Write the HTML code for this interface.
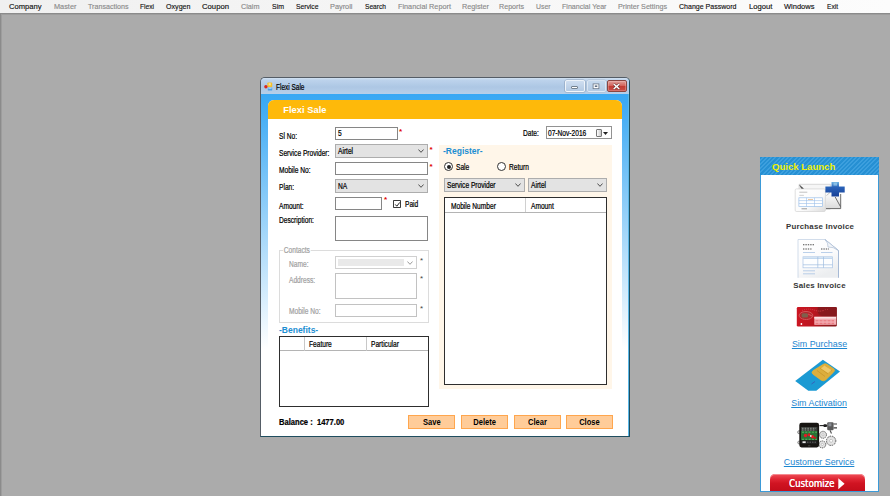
<!DOCTYPE html>
<html>
<head>
<meta charset="utf-8">
<title>Flexi Sale</title>
<style>
html,body{margin:0;padding:0;}
body{width:890px;height:496px;overflow:hidden;background:#ababab;font-family:"Liberation Sans",sans-serif;font-size:8px;color:#000;position:relative;}
.abs{position:absolute;}
*{box-sizing:border-box;}
/* menu */
#menubar{position:absolute;left:0;top:0;width:890px;height:13px;background:linear-gradient(90deg,#f0f0f0,#fcfcfc);}
#menubar span{position:absolute;top:0.5px;height:11px;line-height:11px;font-size:8px;white-space:nowrap;color:#111;transform-origin:0 50%;}
#menubar span.d{color:#8a8a8a;}
#menubar span{-webkit-text-stroke:0.15px currentColor;}
#mdiedge{position:absolute;left:0;top:13px;width:890px;height:483px;box-shadow:inset 1px 1px 0 #8b8b8b,inset 2px 2px 0 #9d9d9d;}
/* window */
#win{position:absolute;left:260px;top:77px;width:370px;height:360px;border:1px solid #555d66;border-right-color:#1f4e5f;border-bottom-color:#1f4e5f;border-bottom-width:1.6px;border-radius:5px 5px 0 0;background:#bdd4ec;overflow:hidden;}
#titlebar{position:absolute;left:0;top:0;width:368px;height:16px;background:linear-gradient(#d3e2f2 0px,#bdd3ec 2px,#adc7e4 9px,#b7cfe9 16px);}
#client{position:absolute;left:0px;top:15.5px;width:368px;height:343px;border-right:1px solid #5ab8e8;background:linear-gradient(#38a8f4 0px,#3eaaf4 10px,#ffffff 255px);}
.lbl{position:absolute;white-space:nowrap;font-size:8.4px;line-height:10px;height:10px;color:#000;transform-origin:0 50%;transform:scaleX(0.79);}
.lbl,.cb .t{-webkit-text-stroke:0.22px currentColor;}
.g{color:#a2a2a2;}
.tb{position:absolute;background:#fff;border:1px solid #868686;}
.cb{position:absolute;background:#e3e3e3;border:1px solid #adadad;}
.cb .t{position:absolute;left:2px;top:1px;font-size:8.4px;line-height:10px;white-space:nowrap;transform-origin:0 50%;transform:scaleX(0.79);}
.cb svg{position:absolute;right:2.6px;top:4.2px;}
.star{position:absolute;color:#e00000;font-size:8px;line-height:8px;font-weight:bold;}
.hd{position:absolute;font-weight:bold;color:#1c8ed2;font-size:8.5px;line-height:10px;white-space:nowrap;transform-origin:0 50%;}
.btn{position:absolute;top:414.5px;width:47px;height:14px;background:#ffcc99;border:1px solid #ffa64d;font-weight:bold;font-size:8.4px;line-height:12px;text-align:center;color:#000;}
.btn span{display:inline-block;transform:scaleX(0.9);}
.grid{position:absolute;background:#fff;border:1px solid #2e2e2e;}
.qi{font-size:7.9px;line-height:10px;text-align:center;color:#363636;white-space:nowrap;font-weight:bold;letter-spacing:0.2px;}
.ql{font-size:8.9px;line-height:10px;text-align:center;color:#1c86d0;white-space:nowrap;text-decoration:underline;}
</style>
</head>
<body>
<div id="mdiedge"></div>
<div id="menubar">
<span style="left:9px;transform:scaleX(0.948)">Company</span>
<span class="d" style="left:53.5px;transform:scaleX(0.918)">Master</span>
<span class="d" style="left:87.5px;transform:scaleX(0.890)">Transactions</span>
<span style="left:140px;transform:scaleX(0.828)">Flexi</span>
<span style="left:166px;transform:scaleX(0.888)">Oxygen</span>
<span style="left:202px;transform:scaleX(0.964)">Coupon</span>
<span class="d" style="left:240.5px;transform:scaleX(0.902)">Claim</span>
<span style="left:271.5px;transform:scaleX(0.870)">Sim</span>
<span style="left:295.5px;transform:scaleX(0.843)">Service</span>
<span class="d" style="left:330px;transform:scaleX(0.918)">Payroll</span>
<span style="left:364.5px;transform:scaleX(0.827)">Search</span>
<span class="d" style="left:397.5px;transform:scaleX(0.909)">Financial Report</span>
<span class="d" style="left:461.5px;transform:scaleX(0.906)">Register</span>
<span class="d" style="left:499px;transform:scaleX(0.893)">Reports</span>
<span class="d" style="left:536px;transform:scaleX(0.858)">User</span>
<span class="d" style="left:562px;transform:scaleX(0.885)">Financial Year</span>
<span class="d" style="left:618px;transform:scaleX(0.896)">Printer Settings</span>
<span style="left:679px;transform:scaleX(0.879)">Change Password</span>
<span style="left:749px;transform:scaleX(0.959)">Logout</span>
<span style="left:784px;transform:scaleX(0.938)">Windows</span>
<span style="left:826.5px;transform:scaleX(0.827)">Exit</span>
</div>

<!-- window chrome -->
<div id="win">
  <div id="titlebar"></div>
  <div id="client"></div>
</div>
<div class="lbl" style="left:276px;top:82.2px;font-size:9px;transform:scaleX(0.72);">Flexi Sale</div>
<!-- caption buttons -->
<div class="abs" style="left:565px;top:80.3px;width:19.5px;height:11.4px;border:1px solid rgba(255,255,255,0.75);box-shadow:0 0 0 0.6px #90a4bc;border-radius:2px;background:linear-gradient(#cfdef0,#b4cae3);"></div>
<div class="abs" style="left:571px;top:86.2px;width:6.6px;height:2.8px;background:#fff;border:0.7px solid #74828f;border-radius:1px;"></div>
<div class="abs" style="left:586.6px;top:80.3px;width:19.3px;height:11.4px;border:1px solid rgba(255,255,255,0.45);box-shadow:0 0 0 0.5px #a9bbd0;border-radius:2px;background:linear-gradient(#c6d9ee,#b4cae3);"></div>
<svg class="abs" style="left:591.5px;top:83px" width="8" height="7" viewBox="0 0 8 7"><rect x="1.1" y="0.9" width="5.8" height="4.8" fill="#fff" stroke="#6a7686" stroke-width="0.8"/><rect x="2.8" y="2.4" width="2.5" height="1.6" fill="#5f6f86"/></svg>
<div class="abs" style="left:607px;top:80.2px;width:20px;height:11.6px;border:0.8px solid #8a4540;border-radius:2px;background:linear-gradient(#e0a09a 0%,#d4665e 45%,#c23a32 50%,#c85048 100%);box-shadow:inset 0 0 0 0.6px rgba(255,220,215,0.5);"></div>
<svg class="abs" style="left:612.4px;top:82.6px" width="9" height="7" viewBox="0 0 9 7"><path d="M1.7 1 L7.3 6 M7.3 1 L1.7 6" stroke="#6a3330" stroke-width="2.5" fill="none"/><path d="M1.7 1 L7.3 6 M7.3 1 L1.7 6" stroke="#fff" stroke-width="1.5" fill="none"/></svg>
<!-- title icon -->
<svg class="abs" style="left:263px;top:81px" width="11" height="11" viewBox="0 0 11 11">
  <rect x="4.4" y="1.4" width="4.8" height="4.8" rx="0.8" fill="#f5bf2a"/>
  <rect x="5.6" y="2.2" width="2.2" height="2.2" fill="#fbe28a"/>
  <rect x="4.8" y="6.4" width="4.4" height="3" rx="0.5" fill="#4aa0e6"/>
  <rect x="5.4" y="6.6" width="3.2" height="1" fill="#cfe5f8"/>
  <circle cx="2.9" cy="5.7" r="1.7" fill="#d8281e"/>
</svg>
<!-- inner panel -->
<div class="abs" style="left:268px;top:100px;width:354px;height:335px;background:#fff;border-radius:6px 6px 0 0;"></div>
<div class="abs" style="left:268px;top:100px;width:354px;height:18.5px;background:#feb90a;border-radius:6px 6px 0 0;"></div>
<div class="abs" style="left:283.2px;top:104.4px;font-weight:bold;font-size:9.3px;line-height:12px;color:#fff;white-space:nowrap;letter-spacing:0.05px;">Flexi Sale</div>

<!-- left column -->
<div class="lbl" style="left:279px;top:131px;">Sl No:</div>
<div class="tb" style="left:335px;top:127px;width:63px;height:13px;"><div class="lbl" style="left:2px;top:0px;">5</div></div>
<div class="star" style="left:399px;top:128px;">*</div>

<div class="lbl" style="left:279px;top:148px;">Service Provider:</div>
<div class="cb" style="left:335px;top:144px;width:93px;height:14px;"><div class="t">Airtel</div><svg width="6" height="4" viewBox="0 0 6 4"><path d="M0.4 0.5 L3 3.3 L5.6 0.5" fill="none" stroke="#3c3c3c" stroke-width="0.9"/></svg></div>
<div class="star" style="left:429.5px;top:146px;">*</div>

<div class="lbl" style="left:279px;top:165px;">Mobile No:</div>
<div class="tb" style="left:335px;top:162px;width:93px;height:13px;"></div>
<div class="star" style="left:429.5px;top:163px;">*</div>

<div class="lbl" style="left:279px;top:182px;">Plan:</div>
<div class="cb" style="left:335px;top:179px;width:93px;height:14px;"><div class="t">NA</div><svg width="6" height="4" viewBox="0 0 6 4"><path d="M0.4 0.5 L3 3.3 L5.6 0.5" fill="none" stroke="#3c3c3c" stroke-width="0.9"/></svg></div>

<div class="lbl" style="left:279px;top:201px;">Amount:</div>
<div class="tb" style="left:335px;top:197px;width:47.4px;height:13px;"></div>
<div class="star" style="left:384px;top:196px;">*</div>
<div class="abs" style="left:393px;top:200px;width:8.4px;height:8.4px;border:1px solid #3c3c3c;border-radius:0.8px;background:#fff;"></div>
<svg class="abs" style="left:393.7px;top:200.8px" width="7" height="7" viewBox="0 0 7 7"><path d="M1.2 3.4 L2.8 5.2 L5.8 1.4" stroke="#222" stroke-width="1" fill="none"/></svg>
<div class="lbl" style="left:405px;top:199px;">Paid</div>

<div class="lbl" style="left:279px;top:215px;">Description:</div>
<div class="tb" style="left:335px;top:216px;width:93px;height:25px;"></div>

<!-- contacts groupbox -->
<div class="abs" style="left:279px;top:250px;width:150px;height:73px;border:1px solid #dcdcdc;"></div>
<div class="lbl g" style="left:283px;top:245px;background:#fff;padding:0 1px;">Contacts</div>
<div class="lbl g" style="left:289px;top:259px;">Name:</div>
<div class="cb" style="left:335px;top:256px;width:82px;height:13px;background:#fff;border-color:#d0d0d0;"><div class="abs" style="left:2px;top:2px;width:66px;height:7px;background:#e9e9e9;"></div><svg width="6" height="4" viewBox="0 0 6 4"><path d="M0.4 0.5 L3 3.3 L5.6 0.5" fill="none" stroke="#9a9a9a" stroke-width="1"/></svg></div>
<div class="star" style="left:420px;top:257px;color:#444;font-weight:normal;">*</div>
<div class="lbl g" style="left:289px;top:275px;">Address:</div>
<div class="tb" style="left:335px;top:273px;width:82px;height:26px;border-color:#c2c2c2;"></div>
<div class="star" style="left:420px;top:275px;color:#444;font-weight:normal;">*</div>
<div class="lbl g" style="left:289px;top:306px;">Mobile No:</div>
<div class="tb" style="left:335px;top:304px;width:82px;height:13px;border-color:#c2c2c2;"></div>
<div class="star" style="left:420px;top:305px;color:#444;font-weight:normal;">*</div>

<!-- benefits -->
<div class="hd" style="left:279px;top:325px;">-Benefits-</div>
<div class="grid" style="left:279px;top:336px;width:150px;height:71px;">
  <div class="abs" style="left:0;top:0;width:148px;height:14px;border-bottom:1px solid #b4b4b4;"></div>
  <div class="abs" style="left:24px;top:0;width:1px;height:14px;background:#c8c8c8;"></div>
  <div class="abs" style="left:86px;top:0;width:1px;height:14px;background:#c8c8c8;"></div>
  <div class="lbl" style="left:29px;top:2px;">Feature</div>
  <div class="lbl" style="left:91px;top:2px;">Particular</div>
</div>

<!-- right column -->
<div class="lbl" style="left:523px;top:128px;">Date:</div>
<div class="tb" style="left:546px;top:126px;width:66px;height:13px;border-color:#929292;"><div class="lbl" style="left:0.8px;top:0.6px;">07-Nov-2016</div>
  <div class="abs" style="left:49px;top:2px;width:6px;height:8px;border:1px solid #777;border-radius:1px;background:linear-gradient(90deg,#fff,#c8c8c8);"></div>
  <svg class="abs" style="left:56px;top:5px" width="5" height="3" viewBox="0 0 5 3"><path d="M0 0 H5 L2.5 3 Z" fill="#222"/></svg>
</div>

<div class="abs" style="left:439.3px;top:144.6px;width:172.5px;height:244px;background:#fff6e9;"></div>
<div class="hd" style="left:443px;top:146.2px;">-Register-</div>

<div class="abs" style="left:444px;top:162px;width:9px;height:9px;border:1px solid #333;border-radius:50%;background:#fff;"></div>
<div class="abs" style="left:446.5px;top:164.5px;width:4px;height:4px;border-radius:50%;background:#222;"></div>
<div class="lbl" style="left:456px;top:162px;">Sale</div>
<div class="abs" style="left:497px;top:162px;width:9px;height:9px;border:1px solid #333;border-radius:50%;background:#fff;"></div>
<div class="lbl" style="left:509px;top:162px;">Return</div>

<div class="cb" style="left:444px;top:178px;width:81px;height:13.7px;"><div class="t">Service Provider</div><svg width="6" height="4" viewBox="0 0 6 4"><path d="M0.4 0.5 L3 3.3 L5.6 0.5" fill="none" stroke="#3c3c3c" stroke-width="0.9"/></svg></div>
<div class="cb" style="left:528px;top:178px;width:79px;height:13.7px;"><div class="t">Airtel</div><svg width="6" height="4" viewBox="0 0 6 4"><path d="M0.4 0.5 L3 3.3 L5.6 0.5" fill="none" stroke="#3c3c3c" stroke-width="0.9"/></svg></div>

<div class="grid" style="left:444px;top:197.4px;width:163px;height:187.2px;">
  <div class="abs" style="left:0;top:0;width:161px;height:15px;border-bottom:1px solid #b4b4b4;"></div>
  <div class="abs" style="left:80px;top:0;width:1px;height:14px;background:#d0d0d0;"></div>
  <div class="lbl" style="left:6px;top:2.5px;">Mobile Number</div>
  <div class="lbl" style="left:86px;top:2.5px;">Amount</div>
</div>

<!-- bottom -->
<div class="lbl" style="left:279px;top:417px;font-weight:bold;transform:scaleX(0.905);">Balance :&nbsp; 1477.00</div>
<div class="btn" style="left:408px;"><span>Save</span></div>
<div class="btn" style="left:461px;"><span>Delete</span></div>
<div class="btn" style="left:514px;"><span>Clear</span></div>
<div class="btn" style="left:566px;"><span>Close</span></div>

<!-- Quick Launch -->
<div class="abs" style="left:760px;top:157px;width:119px;height:335px;background:#fff;border:1.6px solid #3b9ad8;border-top:none;"></div>
<div class="abs" style="left:760px;top:157px;width:119px;height:18px;background:repeating-linear-gradient(135deg,#2690d3 0px,#2690d3 1.6px,#3c9fde 1.6px,#3c9fde 3px);"></div>
<div class="abs" id="qlt" style="left:772.3px;top:160.9px;transform-origin:0 50%;transform:scaleX(1.02);font-weight:bold;font-size:9.4px;line-height:12px;color:#f2f000;white-space:nowrap;">Quick Launch</div>

<!-- purchase invoice icon -->
<svg class="abs" style="left:790px;top:178px" width="60" height="38" viewBox="0 0 60 38">
  <defs>
    <linearGradient id="pg1" x1="0" y1="0" x2="1" y2="1"><stop offset="0" stop-color="#ffffff"/><stop offset="0.6" stop-color="#fbfbfb"/><stop offset="1" stop-color="#dcdcdc"/></linearGradient>
    <linearGradient id="pl1" x1="0" y1="0" x2="0" y2="1"><stop offset="0" stop-color="#6fb4e2"/><stop offset="0.35" stop-color="#2a62b8"/><stop offset="1" stop-color="#173f96"/></linearGradient>
    <linearGradient id="ev1" x1="0" y1="0" x2="0" y2="1"><stop offset="0" stop-color="#ffffff"/><stop offset="1" stop-color="#dadada"/></linearGradient>
  </defs>
  <path d="M9.1 6.3 H40.4 V31 H9.1 Z" fill="#f6f6f6" stroke="#c9c9c9" stroke-width="0.7"/>
  <path d="M35.5 14 H50.8 V30.8 H35.5 Z" fill="url(#ev1)"/>
  <path d="M45.2 19 L50.4 28.5 M36 30.6 H50.6 M50.7 16 V30.6" stroke="#4a4a4a" stroke-width="0.8" fill="none"/>
  <path d="M36.5 17.5 L40 14.500" stroke="#9a9a9a" stroke-width="0.6"/>
  <rect x="5.2" y="10.900" width="30.200" height="22.600" rx="1.300" fill="url(#pg1)" stroke="#d2d2d2" stroke-width="0.7"/>
  <path d="M9.600 7.200 L13.400 10.400 L11.400 10.300 Z" fill="#444" stroke="#444" stroke-width="0.5"/>
  <rect x="9.300" y="13.600" width="8" height="1.300" fill="#cfcfcf"/><rect x="9.300" y="16.800" width="4.600" height="1.200" fill="#d6d6d6"/>
  <rect x="8.900" y="19.800" width="23.600" height="8.700" fill="#fff" stroke="#9cc0ea" stroke-width="0.7"/>
  <path d="M8.900 22.600 H32.500 M8.900 25.500 H32.500 M16.500 19.800 V28.500 M24.500 19.800 V28.500" stroke="#9cc0ea" stroke-width="0.6"/>
  <rect x="18" y="21" width="5" height="0.800" fill="#e6b98a"/>
  <rect x="11.500" y="30.300" width="5.500" height="1" fill="#9a9a9a"/>
  <path d="M41.500 4.100 H49 V8.500 H54.700 V14.500 H49 V18.600 H41.500 V14.500 H35.400 V8.500 H41.500 Z" fill="url(#pl1)"/>
  <rect x="43.500" y="4.600" width="3.500" height="3" fill="#9fd0ee" opacity="0.700"/>
</svg>
<div class="abs qi" style="left:786px;top:221.8px;width:67px;">Purchase Invoice</div>

<!-- sales invoice icon -->
<svg class="abs" style="left:795px;top:237px" width="48" height="44" viewBox="0 0 48 44">
  <defs><linearGradient id="pg2" x1="0" y1="0" x2="0.5" y2="1"><stop offset="0" stop-color="#ffffff"/><stop offset="0.6" stop-color="#fbfbfc"/><stop offset="1" stop-color="#eceef0"/></linearGradient></defs>
  <path d="M3 2.500 H30 L43.500 13.500 V40.800 H3 Z" fill="url(#pg2)"/>
  <path d="M3 40.800 V2.500 H30" fill="none" stroke="#c6d4e6" stroke-width="0.8"/>
  <path d="M30 2.500 L43.500 13.500 V40.800" fill="none" stroke="#9db2d0" stroke-width="0.9"/>
  <path d="M30 2.500 Q33.500 6,33 10 Q38 9.500,43.500 13.500 Z" fill="#f3f5f8" stroke="#aebfd6" stroke-width="0.7"/>
  <path d="M8 7.800 H19 M8 12 H16.500 M26 12 H34" stroke="#4c4c4c" stroke-width="1.100" stroke-dasharray="1.400 1"/>
  <path d="M8 15.500 H20 M26 15.500 H37.500" stroke="#a9c4e4" stroke-width="0.8"/>
  <rect x="8" y="19.800" width="29.500" height="11" fill="#fdfeff" stroke="#a9c4e4" stroke-width="0.7"/>
  <path d="M8 21.200 H37.500" stroke="#c3d8ef" stroke-width="1.600"/>
  <path d="M8 27.800 H37.500 M22.800 19.800 V30.800 M28.500 19.800 V30.800" stroke="#9dbbe0" stroke-width="0.7"/>
  <path d="M8 33.800 H20 M8 36.800 H20" stroke="#a9c4e4" stroke-width="0.8"/>
</svg>
<div class="abs qi" style="left:786px;top:280.6px;width:67px;">Sales Invoice</div>

<!-- sim purchase icon -->
<svg class="abs" style="left:796px;top:306px" width="42" height="22" viewBox="0 0 42 22">
  <defs><linearGradient id="rc" x1="0" y1="0" x2="1" y2="0"><stop offset="0" stop-color="#cc1622"/><stop offset="0.45" stop-color="#b8161f"/><stop offset="0.7" stop-color="#97191e"/><stop offset="1" stop-color="#85191c"/></linearGradient></defs>
  <rect x="0.800" y="1" width="40" height="19.500" rx="1.300" fill="url(#rc)"/>
  <path d="M22 1 H39.500 Q40.800 1,40.800 2.300 V10 H26 Q20 8,22 1 Z" fill="#861a1d" opacity="0.850"/>
  <path d="M6 4.500 Q12 2,18 4 T27 4.500" stroke="#e0535b" stroke-width="0.700" fill="none" stroke-dasharray="1 1"/>
  <path d="M27 5 Q30 2.500,33 4" stroke="#c93a40" stroke-width="0.800" fill="none" stroke-dasharray="1 1.200"/>
  <ellipse cx="10" cy="9.500" rx="6.800" ry="4" fill="#b4262c" stroke="#e9a09c" stroke-width="0.700" stroke-dasharray="1.200 0.800"/>
  <rect x="5.600" y="7.200" width="6.500" height="4.200" rx="1.500" fill="#80604c"/>
  <path d="M12 8 L16 10" stroke="#d8484f" stroke-width="1.200"/>
  <rect x="18.300" y="10.800" width="21.800" height="8" fill="#f4adb2"/>
  <rect x="18.300" y="10.800" width="21.800" height="1.800" fill="#fbe0e2"/>
  <path d="M19.500 14.800 H38 M19.500 17.300 H38" stroke="#e66a72" stroke-width="0.900" stroke-dasharray="3 1"/>
  <circle cx="5.400" cy="18" r="0.900" fill="#fff"/>
</svg>
<div class="abs ql" style="left:786px;top:338.8px;width:67px;">Sim Purchase</div>

<!-- sim activation icon -->
<svg class="abs" style="left:792px;top:357px" width="52" height="38" viewBox="0 0 52 38">
  <path d="M30.900 2.700 L48 14.400 L24.300 33.800 H16.300 L3.200 24 Z" fill="#1b9ad3"/>
  <path d="M31 7.500 Q33 6,35 7.300 L42 12 Q43.500 13.500,41.500 15.200 L33.800 22.800 Q31.500 24.800,29 23 L21 17.200 Q19 15.500,21 13.700 Z" fill="#dcae3c" stroke="#f0b226" stroke-width="0.700"/>
  <path d="M28 11 L36 17 M25 13.500 L33 19.500 M33 9 L40 14" stroke="#c9972a" stroke-width="0.8"/>
  <path d="M32.500 8.500 L39.500 13 L36 16 L29 11.500 Z" fill="#f1cf76" opacity="0.8"/>
  <path d="M19.500 27 L23 24.500" stroke="#3a5ab8" stroke-width="0.9"/>
</svg>
<div class="abs ql" style="left:785.6px;top:397.7px;width:67px;">Sim Activation</div>

<!-- customer service icon -->
<svg class="abs" style="left:796px;top:419px" width="46" height="32" viewBox="0 0 46 32">
  <path d="M23.500 6.600 H31.500" stroke="#222" stroke-width="1.100"/>
  <rect x="27.600" y="5.200" width="3.200" height="2.900" rx="0.600" fill="#1e1e1e"/>
  <rect x="31.200" y="3.300" width="6.400" height="8" rx="1.200" fill="#5a5a5a"/>
  <rect x="32.400" y="4.300" width="3" height="3" fill="#8b8f96"/>
  <path d="M37.600 5 H41 M37.600 8.900 H41" stroke="#3a3a3a" stroke-width="1.200"/>
  <path d="M34 11.300 L35.500 14.500" stroke="#555" stroke-width="1.200"/>
  <g fill="#cfcfcf" stroke="#5e5e5e" stroke-width="1">
    <circle cx="27" cy="15.800" r="3.500" stroke-dasharray="1.300 0.900"/>
    <circle cx="35.100" cy="21.800" r="4.700" stroke-dasharray="1.500 1"/>
    <circle cx="26.300" cy="25.400" r="3.500" stroke-dasharray="1.300 0.900"/>
    <circle cx="3.200" cy="13.200" r="1.600" stroke-width="0.600"/>
    <circle cx="3.200" cy="23.500" r="1.500" stroke-width="0.600"/>
  </g>
  <g fill="#e4e4e4"><circle cx="27" cy="15.800" r="2.600"/><circle cx="35.100" cy="21.800" r="3.600"/><circle cx="26.300" cy="25.400" r="2.600"/></g>
  <g fill="#fff" stroke="#9a9a9a" stroke-width="0.500"><circle cx="27" cy="15.800" r="1.100"/><circle cx="35.100" cy="21.800" r="1.500"/><circle cx="26.300" cy="25.400" r="1.100"/></g>
  <rect x="3.300" y="3.700" width="19.800" height="24.700" rx="2.300" fill="#171512"/>
  <rect x="5" y="8" width="16.400" height="4" fill="#3b3f3b"/>
  <path d="M6 9.300 H20 M6 11 H19" stroke="#b9beb9" stroke-width="0.700" stroke-dasharray="1.500 1.200"/>
  <rect x="5" y="12" width="16.400" height="9.400" fill="#287235"/>
  <path d="M6 13.200 H21 M6 20.300 H21" stroke="#56b764" stroke-width="1" stroke-dasharray="2 1.300"/>
  <circle cx="9.500" cy="16.500" r="1.700" fill="#e01b24"/><circle cx="13" cy="15.800" r="1.500" fill="#d91a22"/><circle cx="16.500" cy="17.800" r="1.700" fill="#e01b24"/><circle cx="19" cy="18.800" r="1.100" fill="#c8161e"/>
  <circle cx="14.800" cy="17" r="0.900" fill="#f4f0e0"/>
  <rect x="5" y="21.400" width="16.400" height="3.600" fill="#1f1f1f"/>
  <rect x="6.500" y="22.300" width="3.200" height="1.800" fill="#e8e8e8"/>
  <path d="M11 23.200 H20" stroke="#777" stroke-width="0.800" stroke-dasharray="1.500 1"/>
  <rect x="12" y="26.400" width="2.500" height="0.900" rx="0.400" fill="#555"/>
</svg>
<div class="abs ql" style="left:779.6px;top:456.8px;width:79px;">Customer Service</div>

<!-- customize -->
<div class="abs" style="left:770px;top:473.5px;width:95px;height:17.7px;border-radius:5px 5px 0 0;background:linear-gradient(#f0505a 0%,#e02734 30%,#d01422 55%,#c40d1b 100%);box-shadow:inset 0 1px 0 #f58a90;"></div>
<div class="abs" id="cust" style="left:789.3px;top:478.4px;font-family:'DejaVu Sans','Liberation Sans',sans-serif;font-size:9.6px;line-height:12px;color:#fff;white-space:nowrap;transform-origin:0 50%;transform:scaleX(0.9);text-shadow:0.35px 0 0 #fff;">Customize</div>
<svg class="abs" style="left:837.6px;top:478.2px" width="7" height="12" viewBox="0 0 7 12"><path d="M0.3 0.2 L6.6 5.7 L0.3 11.2 Z" fill="#fff"/></svg>

</body>
</html>
